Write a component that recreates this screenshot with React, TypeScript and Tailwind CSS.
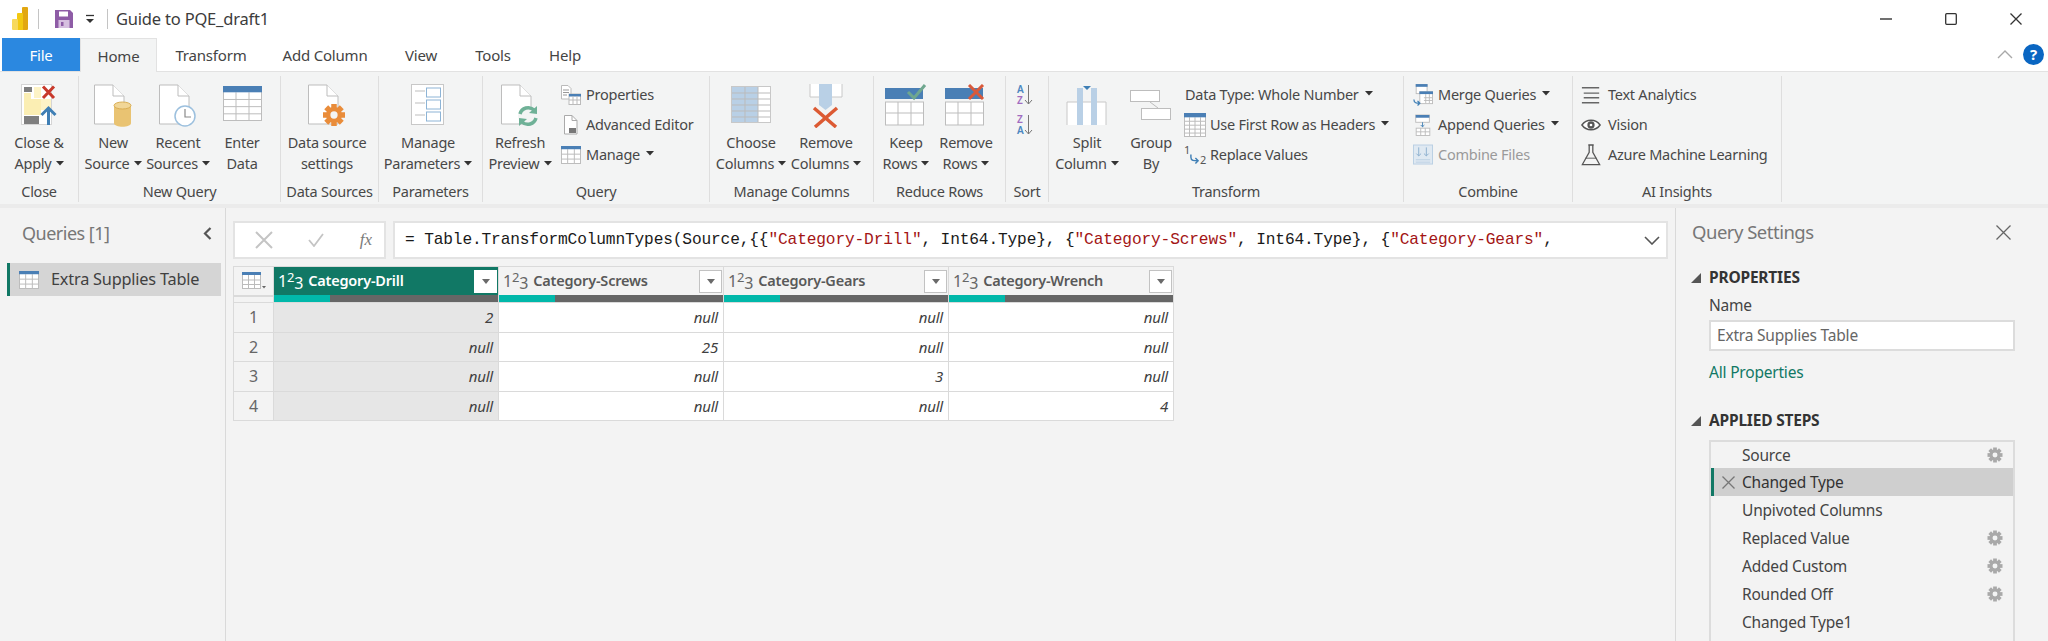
import React from "react";

const Caret = ({ className = "" }: { className?: string }) => (
  <svg viewBox="0 0 8 5" className={`inline-block w-[8px] h-[5px] align-[3px] ${className}`}><polygon points="0,0 8,0 4,4.5" fill="#333" /></svg>
);

const Page = () => (
  <>
    <path d="M1.5 1 H20 L31 12 V40 H1.5 Z" fill="#fff" stroke="#bdbdbd" strokeWidth="1" />
    <path d="M20 1 V12 H31" fill="#fff" stroke="#bdbdbd" strokeWidth="1" />
  </>
);

const Gear = ({ cx, cy, r, fill }: { cx: number; cy: number; r: number; fill: string }) => (
  <g>
    {[0, 45, 90, 135].map((a) => (
      <rect key={a} x={cx - r * 0.25} y={cy - r} width={r * 0.5} height={r * 2} fill={fill} transform={`rotate(${a} ${cx} ${cy})`} />
    ))}
    <circle cx={cx} cy={cy} r={r * 0.72} fill={fill} />
    <circle cx={cx} cy={cy} r={r * 0.33} fill="#f3f4f4" />
  </g>
);

const TableGlyph = ({ w = 20, h = 18, grid = "#bdbdbd", head = "#4a7fb5", cols = 3, rows = 3 }: { w?: number; h?: number; grid?: string; head?: string; cols?: number; rows?: number }) => {
  const hh = h * 0.18;
  const lines: React.ReactNode[] = [];
  for (let i = 1; i < cols; i++) lines.push(<line key={`c${i}`} x1={(w * i) / cols} x2={(w * i) / cols} y1={hh} y2={h} stroke={grid} />);
  for (let i = 1; i < rows; i++) {
    const y = hh + ((h - hh) * i) / rows;
    lines.push(<line key={`r${i}`} x1={0} x2={w} y1={y} y2={y} stroke={grid} />);
  }
  return (
    <svg width={w} height={h} viewBox={`0 0 ${w} ${h}`} className="shrink-0">
      <rect x=".5" y=".5" width={w - 1} height={h - 1} fill="#fff" stroke={grid} />
      {lines}
      <rect x="0" y="0" width={w} height={hh} fill={head} />
    </svg>
  );
};

const IconCloseApply = () => (
  <svg width="36" height="42" viewBox="0 0 36 42">
    <rect x=".5" y=".5" width="30" height="40" fill="#fff" stroke="#d5d5d5" />
    <path d="M3 9 H10 V15 H20 V31 H3 Z" fill="#fbeeb3" />
    <path d="M13 3 H20 V15 H30 V26 H20 V14 H13 Z" fill="#fdf3c6" />
    <rect x="3" y="3" width="8" height="5" fill="#7f7f7f" />
    <rect x="3" y="32" width="15" height="8" fill="#7f7f7f" />
    <path d="M22 2.5 L33 14 M33 2.5 L22 14" stroke="#c8392b" strokeWidth="3" />
    <path d="M27.5 41 V24 M20.5 31 L27.5 24 L34.5 31" stroke="#3f7fb5" strokeWidth="3" fill="none" />
  </svg>
);
const IconNewSource = () => (
  <svg width="40" height="43" viewBox="0 0 40 43">
    <Page />
    <path d="M21 22 V39 C21 44 38 44 38 39 V22 Z" fill="#e9c372" />
    <ellipse cx="29.5" cy="21.5" rx="8.5" ry="3.5" fill="#f1d697" stroke="#d9ae55" />
  </svg>
);
const IconRecent = () => (
  <svg width="40" height="43" viewBox="0 0 40 43">
    <Page />
    <circle cx="27" cy="32" r="10" fill="#fff" stroke="#9cc0de" strokeWidth="1.5" />
    <path d="M27 25 V33 H33" stroke="#8a8a8a" strokeWidth="1.2" fill="none" />
  </svg>
);
const IconEnter = () => (
  <div className="pt-[2px]">
    <TableGlyph w={39} h={35} cols={3} rows={4} />
  </div>
);
const IconDataSrc = () => (
  <svg width="40" height="43" viewBox="0 0 40 43">
    <Page />
    <Gear cx={27} cy={31} r={11} fill="#e98c3a" />
  </svg>
);
const IconParams = () => (
  <svg width="34" height="42" viewBox="0 0 34 42">
    <rect x=".5" y=".5" width="32" height="40" fill="#fff" stroke="#c8c8c8" />
    {[4, 16, 28].map((y) => (
      <g key={y}>
        <line x1="4" x2="14" y1={y + 3} y2={y + 3} stroke="#bdbdbd" />
        <rect x="15.5" y={y} width="14" height="9" fill="#fff" stroke="#8db4d6" />
      </g>
    ))}
  </svg>
);
const IconRefresh = () => (
  <svg width="40" height="43" viewBox="0 0 40 43">
    <Page />
    <circle cx="28" cy="32" r="10" fill="#f3f4f4" />
    <path d="M20 30 A8.5 8.5 0 0 1 34 26" stroke="#6fb197" strokeWidth="3.5" fill="none" />
    <path d="M36 34 A8.5 8.5 0 0 1 22 38" stroke="#6fb197" strokeWidth="3.5" fill="none" />
    <polygon points="37,22 37,30 29,29" fill="#6fb197" />
    <polygon points="19,42 19,34 27,35" fill="#6fb197" />
  </svg>
);
const IconChoose = () => (
  <svg width="40" height="38" viewBox="0 0 40 38" className="mt-[2px]">
    <rect x=".5" y=".5" width="39" height="36" fill="#fff" stroke="#c8c8c8" />
    <rect x="1" y="1" width="26" height="35" fill="#b9d0e6" />
    {[7, 13, 19, 25, 31].map((y) => <line key={y} x1="1" x2="39" y1={y} y2={y} stroke="#bbb" />)}
    {[14, 27].map((x) => <line key={x} x1={x} x2={x} y1="1" y2="36" stroke="#bbb" />)}
  </svg>
);
const IconRemoveCols = () => (
  <svg width="34" height="44" viewBox="0 0 34 44">
    <path d="M1 0 V13 H33 V0" fill="#fff" stroke="#c8c8c8" />
    <path d="M10 0 H23 V21 L16.5 26 L10 21 Z" fill="#b9d0e6" />
    <path d="M5 24 L27 43 M28 24 L6 43" stroke="#dc5a33" strokeWidth="3.5" />
  </svg>
);
const RowsBase = ({ children }: { children: React.ReactNode }) => (
  <svg width="42" height="42" viewBox="0 0 42 42">
    <rect x="0" y="4" width="38" height="11" fill="#4a7fb5" />
    <rect x=".5" y="18" width="38" height="23" fill="#fff" stroke="#bdbdbd" />
    <path d="M13 18 V41 M26 18 V41 M0 29 H38" stroke="#bdbdbd" />
    {children}
  </svg>
);
const IconKeep = () => (
  <RowsBase>
    <path d="M23 8 L29 14 L40 1" stroke="#6fa78f" strokeWidth="3" fill="none" />
  </RowsBase>
);
const IconRemoveRows = () => (
  <RowsBase>
    <path d="M24 1 L38 15 M38 1 L24 15" stroke="#d9593a" strokeWidth="3" />
  </RowsBase>
);
const IconSplit = () => (
  <svg width="42" height="42" viewBox="0 0 42 42">
    <polygon points="17,2 25,2 21,6" fill="#3f7fb5" />
    <path d="M1 41 V18 H40 V41" fill="#fff" stroke="#c8c8c8" />
    <rect x="11" y="4" width="6" height="37" fill="#b9d0e6" />
    <rect x="25" y="4" width="6" height="37" fill="#b9d0e6" />
  </svg>
);
const IconGroup = () => (
  <svg width="42" height="32" viewBox="0 0 42 32" className="mt-[6px]">
    <rect x=".5" y=".5" width="29" height="11" fill="#fff" stroke="#bdbdbd" />
    <rect x="11.5" y="18.5" width="29" height="11" fill="#fff" stroke="#bdbdbd" />
    <path d="M20 12 L28 18" stroke="#bdbdbd" />
  </svg>
);

const IconProps = () => (
  <svg width="20" height="20" viewBox="0 0 20 20">
    <path d="M.5.5 H7 L10 3.5 V14 H.5 Z" fill="#fff" stroke="#bbb" />
    <path d="M2 5 H8 M2 7.5 H8 M2 10 H6" stroke="#999" />
    <rect x="8" y="9" width="11.5" height="10.5" fill="#fff" stroke="#bbb" />
    <rect x="8" y="9" width="12" height="2.5" fill="#4a7fb5" />
    <path d="M12 11 V19 M16 11 V19 M8 15 H20" stroke="#bbb" />
  </svg>
);
const IconAdvanced = () => (
  <svg width="20" height="22" viewBox="0 0 20 22">
    <path d="M3.5 1.5 H11 L16 6.5 V20 H3.5 Z" fill="#fff" stroke="#aaa" />
    <path d="M11 1.5 V6.5 H16" fill="none" stroke="#aaa" />
    <rect x="8" y="14" width="7" height="5" fill="#777" />
  </svg>
);
const IconMerge = () => (
  <svg width="22" height="24" viewBox="0 0 22 24">
    <rect x="3.5" y=".5" width="12" height="10" fill="#fff" stroke="#bbb" />
    <rect x="3" y="0" width="13" height="3" fill="#4a7fb5" />
    <rect x="7.5" y="8.5" width="14" height="13" fill="#fff" stroke="#bbb" />
    <rect x="7" y="8" width="15" height="3" fill="#4a7fb5" />
    <path d="M12 15 H21 M12 18 H21 M14 11 V21 M18 11 V21" stroke="#bbb" />
    <path d="M1 17 C1 21 4 21 7 21 M5 18.5 L7.5 21 L5 23.5" stroke="#3f7fb5" strokeWidth="1.4" fill="none" />
  </svg>
);
const IconAppend = () => (
  <svg width="22" height="24" viewBox="0 0 22 24">
    <rect x="3" y="1" width="15" height="8" fill="#fff" stroke="#bbb" />
    <rect x="3" y="1" width="15" height="3" fill="#4a7fb5" />
    <path d="M10.5 9 V14 M8.5 12 L10.5 14 L12.5 12" stroke="#3f7fb5" fill="none" />
    <rect x="3.5" y="15.5" width="15" height="8" fill="#fff" stroke="#bbb" />
    <path d="M8.5 15.5 V23.5 M13.5 15.5 V23.5 M3.5 19.5 H18.5" stroke="#bbb" />
  </svg>
);
const IconCombine = () => (
  <svg width="21" height="22" viewBox="0 0 21 22">
    <rect x=".5" y=".5" width="20" height="20" fill="#dfe9f2" stroke="#b9cfe3" />
    <path d="M6 3 V12 M3.5 9.5 L6 12 L8.5 9.5 M14 3 V12 M11.5 9.5 L14 12 L16.5 9.5" stroke="#8db0cf" fill="none" />
    <path d="M3 16 H18 M3 18.5 H18" stroke="#b9cfe3" />
  </svg>
);
const IconLines = () => (
  <svg width="22" height="20" viewBox="0 0 22 20">
    <path d="M1 2 H20 M3 8 H20 M3 13 H20 M1 18.5 H20" stroke="#666" strokeWidth="1.5" />
  </svg>
);
const IconEye = () => (
  <svg width="22" height="14" viewBox="0 0 22 14">
    <path d="M1 7 C6 0 16 0 21 7 C16 14 6 14 1 7 Z" fill="#fff" stroke="#555" strokeWidth="1.6" />
    <circle cx="11" cy="7" r="4" fill="#555" />
    <circle cx="11" cy="7" r="1.5" fill="#fff" />
  </svg>
);
const IconFlask = () => (
  <svg width="22" height="24" viewBox="0 0 22 24">
    <path d="M8 1 H14 M9 1 V9 L1.5 22.5 H20.5 L13 9 V1" fill="none" stroke="#555" strokeWidth="1.4" />
    <path d="M5 15.5 H17" stroke="#555" />
  </svg>
);
const IconReplace = () => (
  <span className="flex w-[22px] h-[22px] items-end text-[11px] leading-[12px] text-[#555]">
    <span className="self-start">1</span>
    <svg width="11" height="12" viewBox="0 0 11 12" className="mb-[1px]"><path d="M1 1 V4 C1 8 4 8 9 8 M6 5 L9 8 L6 11" stroke="#3f7fb5" strokeWidth="1.6" fill="none" /></svg>
    <span>2</span>
  </span>
);

const BigBtn = ({ w, icon, l1, l2, caret }: { w: number; icon: React.ReactNode; l1: string; l2: string; caret?: boolean }) => (
  <div style={{ width: w }} className="flex flex-col items-center shrink-0 pt-[8px]">
    <div className="h-[44px] flex items-start justify-center">{icon}</div>
    <div className="mt-[4px] text-center leading-[21px] whitespace-nowrap">
      <div>{l1}</div>
      <div>
        {l2}
        {caret && <Caret className="ml-[4px]" />}
      </div>
    </div>
  </div>
);

const SmallBtn = ({ icon, label, caret, dim, gap = 5 }: { icon?: React.ReactNode; label: string; caret?: boolean; dim?: boolean; gap?: number }) => (
  <div className={`h-[30px] flex items-center whitespace-nowrap ${dim ? "text-[#9a9a9a]" : ""}`}>
    {icon && <span style={{ marginRight: gap }} className="flex items-center justify-center w-[20px] shrink-0">{icon}</span>}
    <span>{label}</span>
    {caret && <Caret className="ml-[6px] mb-[3px]" />}
  </div>
);

const Group = ({ w, label, children }: { w: number; label: string; children: React.ReactNode }) => (
  <div style={{ width: w }} className="h-[126px] mt-[4px] flex flex-col shrink-0 border-r border-[#dedede]">
    <div className="h-[105px] flex">{children}</div>
    <div className="h-[21px] text-center leading-[21px] whitespace-nowrap">{label}</div>
  </div>
);

const SmallCol = ({ className = "", children }: { className?: string; children: React.ReactNode }) => (
  <div className={`pt-[4px] flex flex-col ${className}`}>{children}</div>
);

const Ribbon = () => (
  <div className="h-[132px] flex bg-[#f3f4f4] text-[14.5px] text-[#484848] tracking-[-0.25px] shrink-0">
    <Group w={79} label="Close">
      <BigBtn w={78} icon={<IconCloseApply />} l1="Close &" l2="Apply" caret />
    </Group>
    <Group w={202} label="New Query">
      <div className="w-px" />
      <BigBtn w={66} icon={<IconNewSource />} l1="New" l2="Source" caret />
      <BigBtn w={64} icon={<IconRecent />} l1="Recent" l2="Sources" caret />
      <BigBtn w={64} icon={<IconEnter />} l1="Enter" l2="Data" />
    </Group>
    <Group w={98} label="Data Sources">
      <BigBtn w={92} icon={<IconDataSrc />} l1="Data source" l2="settings" />
    </Group>
    <Group w={104} label="Parameters">
      <BigBtn w={98} icon={<IconParams />} l1="Manage" l2="Parameters" caret />
    </Group>
    <Group w={227} label="Query">
      <BigBtn w={74} icon={<IconRefresh />} l1="Refresh" l2="Preview" caret />
      <SmallCol className="ml-[4px]">
        <SmallBtn icon={<IconProps />} label="Properties" />
        <SmallBtn icon={<IconAdvanced />} label="Advanced Editor" />
        <SmallBtn icon={<TableGlyph w={20} h={18} cols={3} rows={3} />} label="Manage" caret />
      </SmallCol>
    </Group>
    <Group w={164} label="Manage Columns">
      <div className="w-[2px]" />
      <BigBtn w={78} icon={<IconChoose />} l1="Choose" l2="Columns" caret />
      <BigBtn w={72} icon={<IconRemoveCols />} l1="Remove" l2="Columns" caret />
    </Group>
    <Group w={132} label="Reduce Rows">
      <BigBtn w={64} icon={<IconKeep />} l1="Keep" l2="Rows" caret />
      <BigBtn w={56} icon={<IconRemoveRows />} l1="Remove" l2="Rows" caret />
    </Group>
    <Group w={43} label="Sort">
      <div className="pl-[11px] pt-[8px] flex flex-col gap-[8px]">
        {[["A", "Z"], ["Z", "A"]].map(([a, b], i) => (
          <div key={i} className="flex items-center">
            <div className="flex flex-col text-[10px] leading-[11px] font-semibold">
              <span className={a === "A" ? "text-[#4a86c0]" : "text-[#a06cc0]"}>{a}</span>
              <span className={b === "A" ? "text-[#4a86c0]" : "text-[#a06cc0]"}>{b}</span>
            </div>
            <svg width="9" height="20" viewBox="0 0 9 20" className="ml-[1px]"><path d="M4.5 0 V19 M1 15 L4.5 19 L8 15" stroke="#777" fill="none" /></svg>
          </div>
        ))}
      </div>
    </Group>
    <Group w={355} label="Transform">
      <BigBtn w={76} icon={<IconSplit />} l1="Split" l2="Column" caret />
      <BigBtn w={52} icon={<IconGroup />} l1="Group" l2="By" />
      <SmallCol className="ml-[8px]">
        <SmallBtn label="Data Type: Whole Number" caret />
        <SmallBtn icon={<TableGlyph w={22} h={24} cols={4} rows={5} />} gap={5} label="Use First Row as Headers" caret />
        <SmallBtn icon={<IconReplace />} gap={5} label="Replace Values" />
      </SmallCol>
    </Group>
    <Group w={169} label="Combine">
      <SmallCol className="ml-[9px]">
        <SmallBtn icon={<IconMerge />} label="Merge Queries" caret />
        <SmallBtn icon={<IconAppend />} label="Append Queries" caret />
        <SmallBtn icon={<IconCombine />} label="Combine Files" dim />
      </SmallCol>
    </Group>
    <Group w={209} label="AI Insights">
      <SmallCol className="ml-[8px]">
        <SmallBtn icon={<IconLines />} gap={7} label="Text Analytics" />
        <SmallBtn icon={<IconEye />} gap={7} label="Vision" />
        <SmallBtn icon={<IconFlask />} gap={7} label="Azure Machine Learning" />
      </SmallCol>
    </Group>
  </div>
);

const TitleBar = () => (
  <div className="h-[38px] flex items-center bg-white shrink-0">
    <svg width="18" height="24" viewBox="0 0 18 24" className="ml-[11px] shrink-0">
      <rect x="11" y="0" width="6" height="23" rx="1" fill="#e2a711" />
      <rect x="6" y="6" width="6" height="17" rx="1" fill="#f2c811" />
      <rect x="1" y="12" width="6" height="11" rx="1" fill="#f7d95c" />
    </svg>
    <div className="ml-[9px] w-px h-[20px] bg-[#c4c4c4]" />
    <svg width="20" height="20" viewBox="0 0 20 20" className="ml-[15px] shrink-0">
      <path d="M1 1 H16 L19 4 V19 H1 Z" fill="#8e5ca6" />
      <rect x="5" y="2.5" width="9" height="5" fill="#fff" />
      <rect x="4.5" y="11" width="11" height="8" fill="#d6bfe0" />
      <rect x="7" y="13" width="2.5" height="4" fill="#8e5ca6" />
    </svg>
    <svg width="10" height="10" viewBox="0 0 10 10" className="ml-[11px] shrink-0">
      <path d="M1 1.5 H9" stroke="#333" strokeWidth="1.3" />
      <polygon points="1,5 9,5 5,9" fill="#333" />
    </svg>
    <div className="ml-[12px] w-px h-[20px] bg-[#c4c4c4]" />
    <div className="ml-[8px] text-[16.5px] text-[#3c3c3c] tracking-[-0.2px] whitespace-nowrap">Guide to PQE_draft1</div>
    <div className="flex-1" />
    <div className="flex items-center gap-[53px] pr-[26px]">
      <svg width="12" height="12" viewBox="0 0 12 12"><path d="M0 6 H12" stroke="#333" strokeWidth="1.4" /></svg>
      <svg width="12" height="12" viewBox="0 0 12 12"><rect x=".7" y=".7" width="10.6" height="10.6" rx="1" fill="none" stroke="#333" strokeWidth="1.3" /></svg>
      <svg width="12" height="12" viewBox="0 0 12 12"><path d="M.5 .5 L11.5 11.5 M11.5 .5 L.5 11.5" stroke="#333" strokeWidth="1.3" /></svg>
    </div>
  </div>
);

const tabs: [string, number][] = [["Transform", 108], ["Add Column", 120], ["View", 72], ["Tools", 72], ["Help", 72]];

const TabRow = () => (
  <div className="h-[34px] flex items-end bg-white border-b border-[#e2e2e2] shrink-0 text-[15px] text-[#444] tracking-[-0.2px] pl-[2px]">
    <div className="w-[78px] h-[33px] bg-[#2b88e0] text-white flex items-center justify-center pt-[1px]">File</div>
    <div className="w-[77px] h-[34px] bg-[#f3f4f4] border border-b-0 border-[#e2e2e2] flex items-center justify-center -mb-px pt-[1px]">Home</div>
    {tabs.map(([t, w]) => (
      <div key={t} style={{ width: w }} className="h-[33px] flex items-center justify-center pt-[1px]">{t}</div>
    ))}
    <div className="flex-1" />
    <div className="h-[33px] flex items-center pr-[4px] gap-[10px]">
      <svg width="16" height="9" viewBox="0 0 16 9"><path d="M1 8 L8 1 L15 8" stroke="#a8a8a8" strokeWidth="1.4" fill="none" /></svg>
      <div className="w-[21px] h-[21px] rounded-full bg-[#0a66c2] text-white text-[15px] font-bold flex items-center justify-center">?</div>
    </div>
  </div>
);

const QueriesPane = () => (
  <div className="w-[226px] shrink-0 border-r border-[#d9d9d9] flex flex-col pl-[7px] pr-[4px]">
    <div className="h-[55px] flex items-center justify-between pl-[15px] pr-[9px] pb-[5px]">
      <span className="text-[18px] text-[#777] tracking-[-0.5px]">Queries [1]</span>
      <svg width="9" height="13" viewBox="0 0 9 13"><path d="M7.5 1 L2 6.5 L7.5 12" stroke="#555" strokeWidth="2.2" fill="none" /></svg>
    </div>
    <div className="h-[33px] bg-[#d5d5d5] border-l-[3px] border-[#117865] flex items-center pl-[9px] text-[16.3px] text-[#404040] tracking-[-0.2px] whitespace-nowrap">
      <TableGlyph w={20} h={18} cols={3} rows={3} />
      <span className="ml-[12px]">Extra Supplies Table</span>
    </div>
  </div>
);

const TypeIcon = ({ active }: { active?: boolean }) => (
  <span className={`text-[16px] font-normal leading-none whitespace-nowrap ${active ? "text-white" : "text-[#666]"}`}>
    <span>1</span>
    <span className="text-[13px] align-[5px]">2</span>
    <span className="align-[-2px]">3</span>
  </span>
);

const FilterBtn = ({ active }: { active?: boolean }) => (
  <div className={`w-[23px] h-[23px] flex items-center justify-center border ${active ? "bg-white border-white" : "bg-white border-[#c2c2c2]"}`}>
    <svg width="8" height="5" viewBox="0 0 8 5"><polygon points="0,0 8,0 4,5" fill="#6a6a6a" /></svg>
  </div>
);

const columns = ["Category-Drill", "Category-Screws", "Category-Gears", "Category-Wrench"];
const rows = [
  ["2", "null", "null", "null"],
  ["null", "25", "null", "null"],
  ["null", "null", "3", "null"],
  ["null", "null", "null", "4"],
];

const DataTable = () => (
  <div className="mt-[7px] w-[941px] grid grid-cols-[39px_224px_224px_224px_224px] bg-[#dadada] gap-px border border-[#dadada] text-[15px] tracking-[-0.2px]">
    <div className="bg-[#f3f3f3] flex flex-col">
      <div className="h-[28px] flex items-center justify-center">
        <svg width="24" height="18" viewBox="0 0 24 18">
          <rect x=".5" y=".5" width="18" height="16" fill="#fff" stroke="#bbb" />
          <rect x="0" y="0" width="19" height="3" fill="#4a7fb5" />
          <path d="M6.5 3 V17 M12.5 3 V17 M0 8 H19 M0 12.5 H19" stroke="#bbb" />
          <polygon points="20,14 24,14 22,16.5" fill="#666" />
        </svg>
      </div>
      <div className="flex-1 border-t-2 border-[#dadada]" />
    </div>
    {columns.map((c, i) => (
      <div key={c} className="flex flex-col">
        <div className={`h-[28px] flex items-center pl-[4px] pr-[1px] font-semibold ${i === 0 ? "bg-[#117865] text-white" : "bg-[#f3f3f3] text-[#595959]"}`}>
          <TypeIcon active={i === 0} />
          <span className="ml-[5px] flex-1 whitespace-nowrap text-[14.5px]">{c}</span>
          <FilterBtn active={i === 0} />
        </div>
        <div className="h-[7px] flex bg-[#666666]">
          <div className="w-[56px] bg-[#01b8aa]" />
        </div>
      </div>
    ))}
    {rows.map((r, ri) => (
      <React.Fragment key={ri}>
        <div className="h-[28.5px] bg-[#f3f3f3] text-[#666] text-[16px] flex items-center justify-center">{ri + 1}</div>
        {r.map((v, ci) => (
          <div key={ci} className={`h-[28.5px] flex items-center justify-end pr-[5px] italic text-[#404040] ${ci === 0 ? "bg-[#e6e6e6]" : "bg-white"}`}>{v}</div>
        ))}
      </React.Fragment>
    ))}
  </div>
);

const FormulaBar = () => (
  <div className="h-[38px] flex gap-[7px] pr-[7px]">
    <div className="w-[153px] h-[38px] shrink-0 bg-white border-2 border-[#e3e3e3] flex items-center pl-[20px] pr-[12px] justify-between">
      <svg width="18" height="18" viewBox="0 0 18 18"><path d="M1 1 L17 17 M17 1 L1 17" stroke="#c4c4c4" strokeWidth="2" /></svg>
      <svg width="16" height="14" viewBox="0 0 16 14"><path d="M1 7 L6 13 L15 1" stroke="#c4c4c4" strokeWidth="1.8" fill="none" /></svg>
      <span className="font-['Liberation_Serif'] italic text-[17px] text-[#7a7a7a]">fx</span>
    </div>
    <div className="flex-1 min-w-0 h-[38px] bg-white border-2 border-[#e3e3e3] flex items-center pl-[10px] pr-[6px]">
      <div className="flex-1 min-w-0 overflow-hidden whitespace-pre font-['Liberation_Mono'] text-[16.2px] tracking-[-0.15px] text-[#1a1a1a]">
        {'= Table.TransformColumnTypes(Source,{{'}<span className="text-[#a31515]">"Category-Drill"</span>{', Int64.Type}, {'}<span className="text-[#a31515]">"Category-Screws"</span>{', Int64.Type}, {'}<span className="text-[#a31515]">"Category-Gears"</span>{','}
      </div>
      <svg width="16" height="9" viewBox="0 0 16 9" className="ml-[6px] shrink-0"><path d="M1 1 L8 8 L15 1" stroke="#555" strokeWidth="1.6" fill="none" /></svg>
    </div>
  </div>
);

const steps: [string, boolean, boolean][] = [
  ["Source", true, false],
  ["Changed Type", false, true],
  ["Unpivoted Columns", false, false],
  ["Replaced Value", true, false],
  ["Added Custom", true, false],
  ["Rounded Off", true, false],
  ["Changed Type1", false, false],
];

const Tri = () => (
  <svg width="10" height="10" viewBox="0 0 10 10" className="shrink-0"><polygon points="10,0 10,10 0,10" fill="#555" /></svg>
);

const SettingsPane = () => (
  <div className="flex-1 min-w-0 border-l border-[#d9d9d9] pl-[15px] pr-[33px] text-[15.5px] text-[#444] tracking-[-0.2px]">
    <div className="h-[48px] flex items-center justify-between pr-[4px]">
      <span className="text-[18.5px] text-[#777] tracking-[-0.5px] ml-[1px]">Query Settings</span>
      <svg width="15" height="15" viewBox="0 0 15 15"><path d="M.5 .5 L14.5 14.5 M14.5 .5 L.5 14.5" stroke="#666" strokeWidth="1.3" /></svg>
    </div>
    <div className="h-[30px] mt-[6px] pt-[1px] flex items-center font-bold text-[#333]"><Tri /><span className="ml-[8px]">PROPERTIES</span></div>
    <div className="ml-[18px] h-[28px] flex items-center">Name</div>
    <div className="ml-[18px] h-[31px] bg-white border-2 border-[#dcdcdc] flex items-center pl-[6px] text-[#666] whitespace-nowrap">Extra Supplies Table</div>
    <div className="ml-[18px] h-[44px] flex items-center text-[#117865]">All Properties</div>
    <div className="h-[45px] flex items-center font-bold text-[#333] pt-[6px]"><Tri /><span className="ml-[8px]">APPLIED STEPS</span></div>
    <div className="ml-[18px] border-2 border-b-0 border-[#dcdcdc] h-[220px]">
      {steps.map(([s, gear, active], i) => (
        <div key={s} className={`${i === 0 ? "h-[26px]" : "h-[28px]"} flex items-center whitespace-nowrap ${active ? "bg-[#cfcfcf] text-[#333]" : ""}`}>
          <div className={`w-[31px] h-full flex items-center justify-center shrink-0 ${active ? "border-l-[3px] border-[#117865]" : ""}`}>
            {active && <svg width="13" height="13" viewBox="0 0 13 13"><path d="M.5 .5 L12.5 12.5 M12.5 .5 L.5 12.5" stroke="#777" strokeWidth="1.3" /></svg>}
          </div>
          <span className="flex-1 pt-[2px]">{s}</span>
          {gear && (
            <svg width="16" height="16" viewBox="0 0 16 16" className="mr-[10px]"><Gear cx={8} cy={8} r={7.5} fill="#a9a9a9" /></svg>
          )}
        </div>
      ))}
    </div>
  </div>
);

export default function App() {
  return (
    <div className="w-[2048px] h-[641px] overflow-hidden flex flex-col bg-[#f3f3f3] font-['Noto_Sans',sans-serif]">
      <TitleBar />
      <TabRow />
      <Ribbon />
      <div className="h-[4px] bg-[#ebebeb] shrink-0" />
      <div className="flex-1 min-h-0 flex">
        <QueriesPane />
        <div className="w-[1449px] shrink-0 pl-[7px]">
          <div className="pt-[13px]">
            <FormulaBar />
            <DataTable />
          </div>
        </div>
        <SettingsPane />
      </div>
    </div>
  );
}
